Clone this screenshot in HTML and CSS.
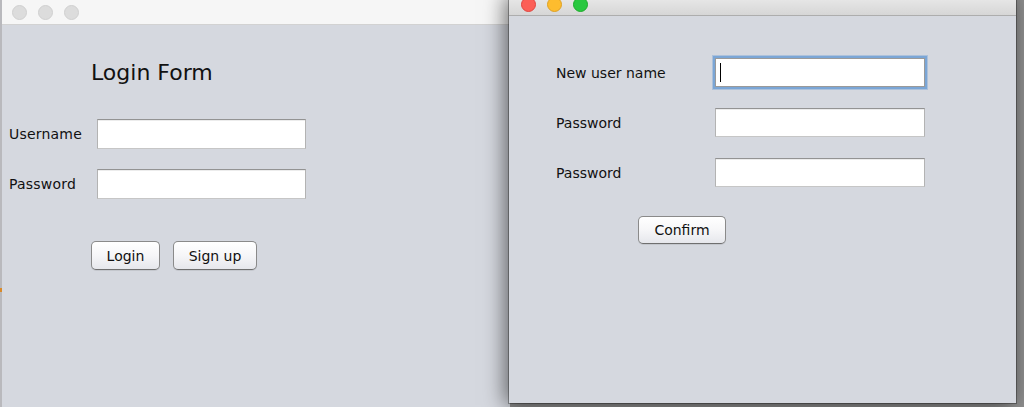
FILE: index.html
```html
<!DOCTYPE html>
<html>
<head>
<meta charset="utf-8">
<link rel="stylesheet" href="styles.css">
</head>
<body>
<div class="desktop">
  <div class="edge-mark"></div>
  <section class="window login-win">
    <header class="titlebar inactive">
      <span class="light"></span><span class="light"></span><span class="light"></span>
    </header>
    <div class="content login-content">
      <h1 class="form-title">Login Form</h1>
      <div class="form-grid login-grid">
        <label class="label">Username</label>
        <div class="field"></div>
        <label class="label">Password</label>
        <div class="field"></div>
      </div>
      <div class="btn-row">
        <button class="btn btn-login">Login</button>
        <button class="btn btn-signup">Sign up</button>
      </div>
    </div>
  </section>

  <section class="window signup-win">
    <header class="titlebar active">
      <span class="light red"></span><span class="light yellow"></span><span class="light green"></span>
    </header>
    <div class="content signup-content">
      <div class="form-grid signup-grid">
        <label class="label">New user name</label>
        <div class="field focused"><span class="caret"></span></div>
        <label class="label">Password</label>
        <div class="field"></div>
        <label class="label">Password</label>
        <div class="field"></div>
      </div>
      <div class="confirm-row">
        <button class="btn btn-confirm">Confirm</button>
      </div>
    </div>
  </section>
</div>
</body>
</html>
```

FILE: styles.css
```css
* { box-sizing: border-box; }

html, body {
  margin: 0;
  padding: 0;
  width: 1024px;
  height: 407px;
  overflow: hidden;
}

body {
  font-family: "DejaVu Sans", "Liberation Sans", sans-serif;
  color: #111;
  background: #8e8e8e;
}

.desktop {
  position: relative;
  width: 1024px;
  height: 407px;
  background: linear-gradient(to right, #b9b9bd 0, #b9b9bd 2px, #8e8e8e 2px);
}

.edge-mark {
  position: absolute;
  left: 0;
  top: 288px;
  width: 2px;
  height: 4px;
  background: #d98a2a;
}

.window {
  position: absolute;
  display: flex;
  flex-direction: column;
  background: #d5d8df;
}

.login-win {
  left: 2px;
  top: 0;
  width: 508px;
  height: 407px;
}

.signup-win {
  left: 509px;
  top: -6px;
  width: 507px;
  height: 409px;
  box-shadow: -4px 2px 20px rgba(0, 0, 0, 0.55), 0 0 0 1px rgba(0, 0, 0, 0.3);
}

.titlebar {
  display: flex;
  align-items: center;
  gap: 11px;
  flex: none;
}

.titlebar.inactive {
  height: 25px;
  padding: 0 0 0 10px;
  background: #f6f6f6;
  border-bottom: 1px solid #d2d2d2;
}

.titlebar.active {
  height: 22px;
  padding: 0 0 0 12px;
  gap: 11px;
  background: linear-gradient(#ececec, #d6d6d6);
  border-bottom: 1px solid #adadad;
}

.light {
  width: 15px;
  height: 15px;
  border-radius: 50%;
  background: #dcdcdc;
  border: 1px solid #d0d0d0;
  flex: none;
}

.light.red { background: #fc5f57; border-color: #e0443e; }
.light.yellow { background: #fdbc2e; border-color: #dea123; }
.light.green { background: #29c840; border-color: #1aab29; }

.content {
  flex: 1;
  display: flex;
  flex-direction: column;
}

.login-content {
  padding: 35px 0 0 7px;
}

.form-title {
  margin: 0 0 33px 82px;
  font-weight: normal;
  font-size: 22px;
  line-height: 26px;
  color: #111;
}

.form-grid {
  display: grid;
  align-items: center;
}

.login-grid {
  grid-template-columns: 88px 209px;
  row-gap: 20px;
}

.signup-grid {
  grid-template-columns: 159px 210px;
  row-gap: 21px;
}

.label {
  font-size: 14px;
  line-height: 18px;
  color: #111;
  white-space: nowrap;
}

.login-grid .label { letter-spacing: 0.2px; }

.field {
  position: relative;
  height: 30px;
  background: #fff;
  border: 1px solid #b3b3b3;
  border-top-color: #939393;
  border-bottom-color: #c6c6c6;
  box-shadow: inset 0 1px 0 #ececec;
}

.signup-grid .field { height: 29px; }

.field.focused {
  border-color: #9a9a9a;
  box-shadow: 0 0 0 2px #7ba6d6, 0 0 0 3px rgba(123, 166, 214, 0.45);
}

.caret {
  position: absolute;
  left: 4px;
  top: 4px;
  width: 1px;
  height: 19px;
  background: #000;
}

.btn-row {
  display: flex;
  gap: 13px;
  margin: 42px 0 0 82px;
}

.btn {
  font-family: "DejaVu Sans", "Liberation Sans", sans-serif;
  font-size: 14px;
  color: #111;
  height: 29px;
  padding: 0;
  border: 1px solid #8a8a8a;
  border-bottom-color: #6f6f6f;
  border-radius: 5px;
  background: linear-gradient(#ffffff 0%, #f6f6f8 50%, #e6e7ec 100%);
  box-shadow: 0 1px 0 rgba(0, 0, 0, 0.08);
}

.btn-login { width: 69px; }
.btn-signup { width: 84px; }

.signup-content {
  padding: 42px 0 0 47px;
}

.confirm-row {
  display: flex;
  margin: 29px 0 0 82px;
}

.btn-confirm {
  width: 88px;
  height: 28px;
}
```
